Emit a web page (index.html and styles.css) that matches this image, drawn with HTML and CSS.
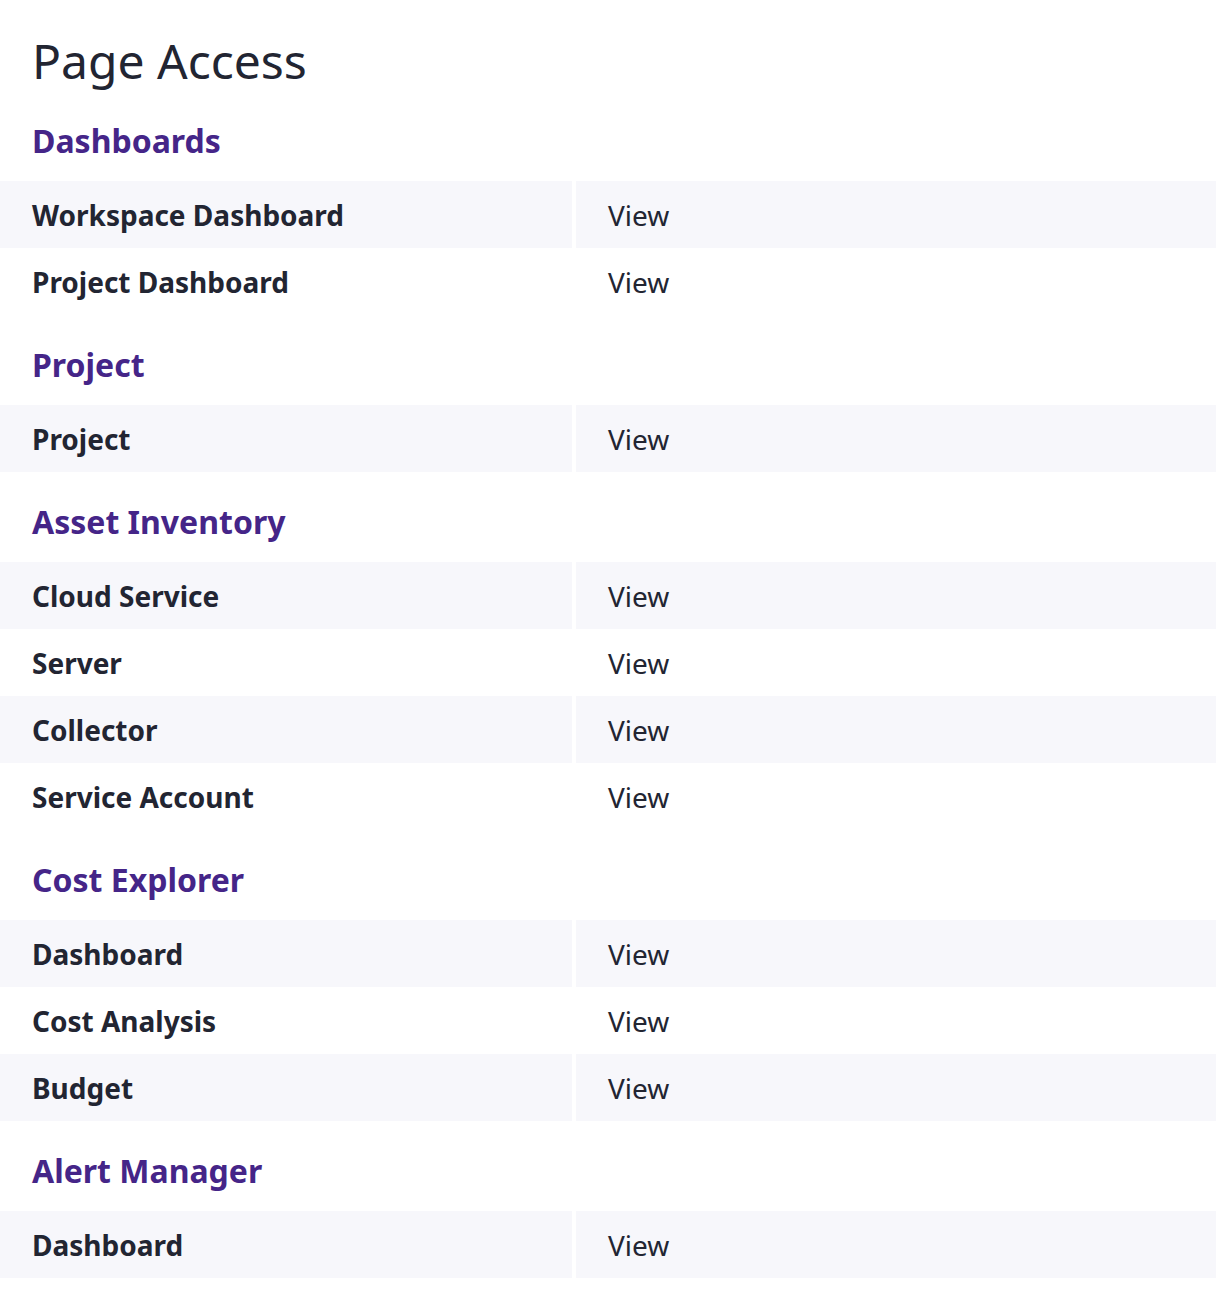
FILE: index.html
```html
<!DOCTYPE html>
<html>
<head>
<meta charset="utf-8">
<link rel="stylesheet" href="styles.css">
</head>
<body>
<div class="page">
  <h1 class="title">Page Access</h1>

  <section class="group">
    <h2 class="group-title">Dashboards</h2>
    <div class="row odd"><div class="cell name">Workspace Dashboard</div><div class="cell perm">View</div></div>
    <div class="row"><div class="cell name">Project Dashboard</div><div class="cell perm">View</div></div>
  </section>

  <section class="group">
    <h2 class="group-title">Project</h2>
    <div class="row odd"><div class="cell name">Project</div><div class="cell perm">View</div></div>
  </section>

  <section class="group">
    <h2 class="group-title">Asset Inventory</h2>
    <div class="row odd"><div class="cell name">Cloud Service</div><div class="cell perm">View</div></div>
    <div class="row"><div class="cell name">Server</div><div class="cell perm">View</div></div>
    <div class="row odd"><div class="cell name">Collector</div><div class="cell perm">View</div></div>
    <div class="row"><div class="cell name">Service Account</div><div class="cell perm">View</div></div>
  </section>

  <section class="group">
    <h2 class="group-title">Cost Explorer</h2>
    <div class="row odd"><div class="cell name">Dashboard</div><div class="cell perm">View</div></div>
    <div class="row"><div class="cell name">Cost Analysis</div><div class="cell perm">View</div></div>
    <div class="row odd"><div class="cell name">Budget</div><div class="cell perm">View</div></div>
  </section>

  <section class="group">
    <h2 class="group-title">Alert Manager</h2>
    <div class="row odd"><div class="cell name">Dashboard</div><div class="cell perm">View</div></div>
  </section>
</div>
</body>
</html>
```

FILE: styles.css
```css
html, body {
  margin: 0;
  padding: 0;
  background: #ffffff;
}

body {
  font-family: "Noto Sans", "Open Sans", sans-serif;
  color: #222532;
}

.page {
  width: 1216px;
}

.title {
  margin: 31px 0 0;
  padding: 0 32px;
  font-size: 48px;
  font-weight: 400;
  line-height: 60px;
  color: #222532;
}

.group-title {
  margin: 0;
  padding: 30px 32px 20px;
  font-size: 32px;
  font-weight: 700;
  line-height: 40px;
  color: #452588;
}

.row {
  display: grid;
  grid-template-columns: 572px 1fr;
  column-gap: 4px;
  height: 67px;
}

.cell {
  display: flex;
  align-items: center;
  padding: 0 32px;
  font-size: 28px;
  line-height: 38px;
  color: #222532;
}

.row.odd .cell {
  background: #f7f7fb;
}

.name {
  font-weight: 700;
}

.perm {
  font-weight: 400;
}
```
